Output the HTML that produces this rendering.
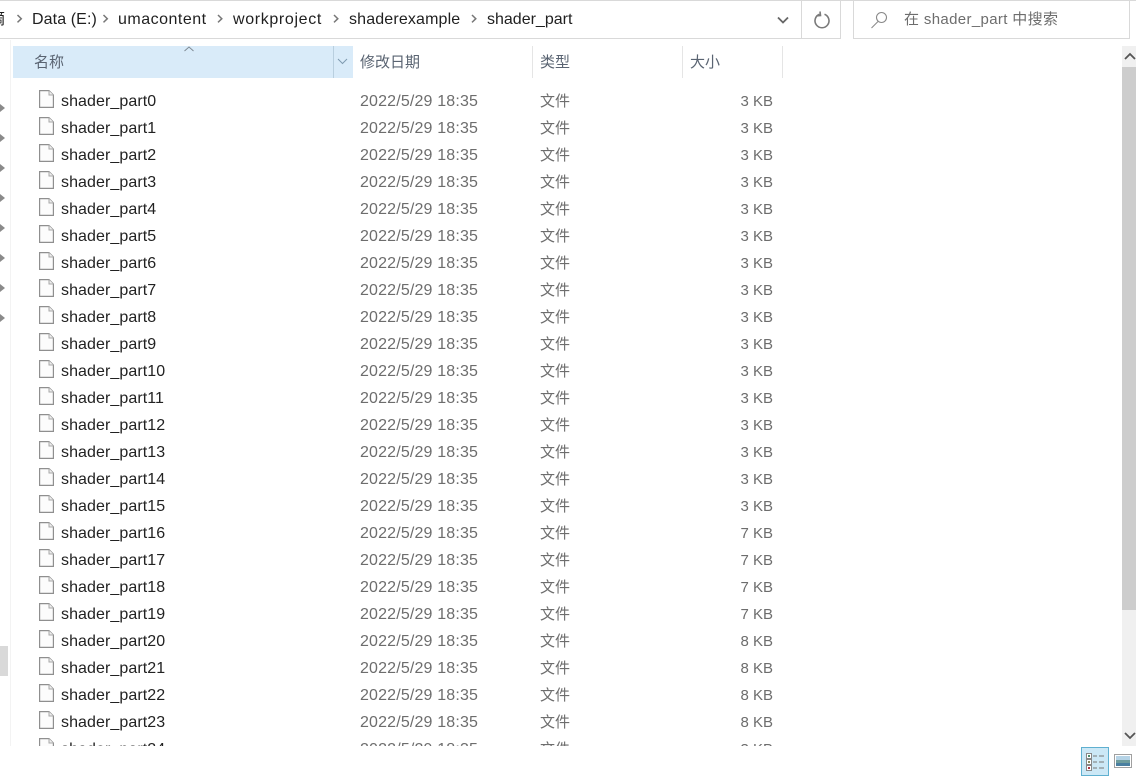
<!DOCTYPE html>
<html lang="zh">
<head>
<meta charset="utf-8">
<title>shader_part</title>
<style>
html,body{margin:0;padding:0;background:#fff}
body{width:1136px;height:777px;position:relative;overflow:hidden;font-family:"Liberation Sans","Noto Sans CJK SC",sans-serif;font-size:16px}
.a{position:absolute;white-space:nowrap}
.crumb{top:10px;height:20px;line-height:20px;color:#1f1f1f;font-size:16px}
.hd{top:53px;height:20px;line-height:20px;color:#5a6472;font-size:15px}
#list{position:absolute;left:0;top:87px;width:1100px;height:659px;overflow:hidden}
.r{position:absolute;left:0;width:800px;height:27px;line-height:27px}
.r svg{position:absolute;left:39px;top:3px}
.n{position:absolute;top:1px;left:61px;color:#222;letter-spacing:.08px}
.d{position:absolute;top:1px;left:360px;color:#6d6d6d;letter-spacing:.16px}
.t{position:absolute;top:1px;left:540px;color:#6d6d6d;font-size:15px}
.s{position:absolute;top:1px;right:27px;color:#6d6d6d;font-size:15px}
.tri{position:absolute;left:0;width:0;height:0;border-left:5px solid #8a8a8a;border-top:4px solid transparent;border-bottom:4px solid transparent}
</style>
</head>
<body>
<svg width="0" height="0" style="position:absolute"><defs>
<symbol id="f" viewBox="0 0 15 18"><path d="M.6.6H10L14.400 5V17.400H.6Z" fill="#fcfcfc" stroke="#8f8f8f" stroke-width="1.200"/><path d="M10 .6V5H14.400" fill="#eee" stroke="#a8a8a8"/></symbol>
</defs></svg>

<!-- top toolbar -->
<div class="a" style="left:0;top:0;width:1136px;height:1px;background:#d9d9d9"></div>
<div class="a" style="left:0;top:38px;width:802px;height:1px;background:#d9d9d9"></div>
<div class="a" style="left:801px;top:0;width:1px;height:39px;background:#d9d9d9"></div>
<div class="a" style="left:801px;top:0;width:40px;height:39px;border-right:1px solid #d9d9d9;border-bottom:1px solid #d9d9d9;box-sizing:border-box"></div>
<div class="a" style="left:853px;top:0;width:277px;height:39px;border:1px solid #d9d9d9;box-sizing:border-box"></div>

<div class="a crumb" style="left:-11px">摘</div>
<div class="a crumb" style="left:32px;letter-spacing:.1px">Data (E:)</div>
<div class="a crumb" style="left:118px;letter-spacing:.5px">umacontent</div>
<div class="a crumb" style="left:233px;letter-spacing:.65px">workproject</div>
<div class="a crumb" style="left:349px;letter-spacing:.15px">shaderexample</div>
<div class="a crumb" style="left:487px">shader_part</div>

<svg class="a" style="left:0;top:0" width="500" height="39" fill="none" stroke="#777" stroke-width="1.500">
<path d="M17.500 15l3.800 3.700-3.800 3.700"/><path d="M103.500 15l3.800 3.700-3.800 3.700"/><path d="M218 15l3.800 3.700-3.800 3.700"/><path d="M334 15l3.800 3.700-3.800 3.700"/><path d="M472 15l3.800 3.700-3.800 3.700"/>
</svg>
<svg class="a" style="left:776px;top:15px" width="14" height="10" fill="none" stroke="#666" stroke-width="1.800"><path d="M2 2.500l5 5 5-5"/></svg>
<svg class="a" style="left:813px;top:11px" width="18" height="18" fill="none" stroke="#7a7a7a" stroke-width="1.600"><path d="M6.500 3.200A7 7 0 1 0 11.500 3.200"/><path d="M6 .5L6.500 4.500 2.500 4.800" transform="translate(1 0)"/></svg>
<svg class="a" style="left:870px;top:11px" width="18" height="18" fill="none" stroke="#8a8a8a" stroke-width="1.100"><circle cx="11.500" cy="6.500" r="5"/><path d="M8 10.500L1.500 17"/></svg>
<div class="a" style="left:904px;top:10px;height:20px;line-height:20px;color:#6d6d6d;font-size:15px;letter-spacing:.35px">在 shader_part 中搜索</div>

<!-- left nav slice -->
<div class="a" style="left:10px;top:40px;width:1px;height:706px;background:#f3f3f3"></div>
<div class="a" style="left:0;top:646px;width:8px;height:30px;background:#d9d9d9"></div>
<div class="tri" style="top:104px"></div>
<div class="tri" style="top:134px"></div>
<div class="tri" style="top:164px"></div>
<div class="tri" style="top:194px"></div>
<div class="tri" style="top:224px"></div>
<div class="tri" style="top:254px"></div>
<div class="tri" style="top:284px"></div>
<div class="tri" style="top:314px"></div>

<!-- headers -->
<div class="a" style="left:13px;top:46px;width:340px;height:32px;background:#d9ebf9"></div>
<div class="a" style="left:333px;top:46px;width:1px;height:32px;background:#b9cfdf"></div>
<svg class="a" style="left:183px;top:45px" width="12" height="8" fill="none" stroke="#7f8a94" stroke-width="1"><path d="M1.500 6L6 2l4.500 4"/></svg>
<svg class="a" style="left:337px;top:58px" width="11" height="7" fill="none" stroke="#7f9ab0" stroke-width="1"><path d="M1 1l4.500 4.500L10 1"/></svg>
<div class="a hd" style="left:34px">名称</div>
<div class="a hd" style="left:360px">修改日期</div>
<div class="a hd" style="left:540px">类型</div>
<div class="a hd" style="left:690px">大小</div>
<div class="a" style="left:532px;top:46px;width:1px;height:32px;background:#e5e5e5"></div>
<div class="a" style="left:682px;top:46px;width:1px;height:32px;background:#e5e5e5"></div>
<div class="a" style="left:782px;top:46px;width:1px;height:32px;background:#e5e5e5"></div>

<!-- rows -->
<div id="list">
<div class="r" style="top:0"><svg width="15" height="18"><use href="#f"/></svg><span class="n">shader_part0</span><span class="d">2022/5/29 18:35</span><span class="t">文件</span><span class="s">3 KB</span></div>
<div class="r" style="top:27px"><svg width="15" height="18"><use href="#f"/></svg><span class="n">shader_part1</span><span class="d">2022/5/29 18:35</span><span class="t">文件</span><span class="s">3 KB</span></div>
<div class="r" style="top:54px"><svg width="15" height="18"><use href="#f"/></svg><span class="n">shader_part2</span><span class="d">2022/5/29 18:35</span><span class="t">文件</span><span class="s">3 KB</span></div>
<div class="r" style="top:81px"><svg width="15" height="18"><use href="#f"/></svg><span class="n">shader_part3</span><span class="d">2022/5/29 18:35</span><span class="t">文件</span><span class="s">3 KB</span></div>
<div class="r" style="top:108px"><svg width="15" height="18"><use href="#f"/></svg><span class="n">shader_part4</span><span class="d">2022/5/29 18:35</span><span class="t">文件</span><span class="s">3 KB</span></div>
<div class="r" style="top:135px"><svg width="15" height="18"><use href="#f"/></svg><span class="n">shader_part5</span><span class="d">2022/5/29 18:35</span><span class="t">文件</span><span class="s">3 KB</span></div>
<div class="r" style="top:162px"><svg width="15" height="18"><use href="#f"/></svg><span class="n">shader_part6</span><span class="d">2022/5/29 18:35</span><span class="t">文件</span><span class="s">3 KB</span></div>
<div class="r" style="top:189px"><svg width="15" height="18"><use href="#f"/></svg><span class="n">shader_part7</span><span class="d">2022/5/29 18:35</span><span class="t">文件</span><span class="s">3 KB</span></div>
<div class="r" style="top:216px"><svg width="15" height="18"><use href="#f"/></svg><span class="n">shader_part8</span><span class="d">2022/5/29 18:35</span><span class="t">文件</span><span class="s">3 KB</span></div>
<div class="r" style="top:243px"><svg width="15" height="18"><use href="#f"/></svg><span class="n">shader_part9</span><span class="d">2022/5/29 18:35</span><span class="t">文件</span><span class="s">3 KB</span></div>
<div class="r" style="top:270px"><svg width="15" height="18"><use href="#f"/></svg><span class="n">shader_part10</span><span class="d">2022/5/29 18:35</span><span class="t">文件</span><span class="s">3 KB</span></div>
<div class="r" style="top:297px"><svg width="15" height="18"><use href="#f"/></svg><span class="n">shader_part11</span><span class="d">2022/5/29 18:35</span><span class="t">文件</span><span class="s">3 KB</span></div>
<div class="r" style="top:324px"><svg width="15" height="18"><use href="#f"/></svg><span class="n">shader_part12</span><span class="d">2022/5/29 18:35</span><span class="t">文件</span><span class="s">3 KB</span></div>
<div class="r" style="top:351px"><svg width="15" height="18"><use href="#f"/></svg><span class="n">shader_part13</span><span class="d">2022/5/29 18:35</span><span class="t">文件</span><span class="s">3 KB</span></div>
<div class="r" style="top:378px"><svg width="15" height="18"><use href="#f"/></svg><span class="n">shader_part14</span><span class="d">2022/5/29 18:35</span><span class="t">文件</span><span class="s">3 KB</span></div>
<div class="r" style="top:405px"><svg width="15" height="18"><use href="#f"/></svg><span class="n">shader_part15</span><span class="d">2022/5/29 18:35</span><span class="t">文件</span><span class="s">3 KB</span></div>
<div class="r" style="top:432px"><svg width="15" height="18"><use href="#f"/></svg><span class="n">shader_part16</span><span class="d">2022/5/29 18:35</span><span class="t">文件</span><span class="s">7 KB</span></div>
<div class="r" style="top:459px"><svg width="15" height="18"><use href="#f"/></svg><span class="n">shader_part17</span><span class="d">2022/5/29 18:35</span><span class="t">文件</span><span class="s">7 KB</span></div>
<div class="r" style="top:486px"><svg width="15" height="18"><use href="#f"/></svg><span class="n">shader_part18</span><span class="d">2022/5/29 18:35</span><span class="t">文件</span><span class="s">7 KB</span></div>
<div class="r" style="top:513px"><svg width="15" height="18"><use href="#f"/></svg><span class="n">shader_part19</span><span class="d">2022/5/29 18:35</span><span class="t">文件</span><span class="s">7 KB</span></div>
<div class="r" style="top:540px"><svg width="15" height="18"><use href="#f"/></svg><span class="n">shader_part20</span><span class="d">2022/5/29 18:35</span><span class="t">文件</span><span class="s">8 KB</span></div>
<div class="r" style="top:567px"><svg width="15" height="18"><use href="#f"/></svg><span class="n">shader_part21</span><span class="d">2022/5/29 18:35</span><span class="t">文件</span><span class="s">8 KB</span></div>
<div class="r" style="top:594px"><svg width="15" height="18"><use href="#f"/></svg><span class="n">shader_part22</span><span class="d">2022/5/29 18:35</span><span class="t">文件</span><span class="s">8 KB</span></div>
<div class="r" style="top:621px"><svg width="15" height="18"><use href="#f"/></svg><span class="n">shader_part23</span><span class="d">2022/5/29 18:35</span><span class="t">文件</span><span class="s">8 KB</span></div>
<div class="r" style="top:648px"><svg width="15" height="18"><use href="#f"/></svg><span class="n">shader_part24</span><span class="d">2022/5/29 18:35</span><span class="t">文件</span><span class="s">3 KB</span></div>
</div>

<!-- scrollbar -->
<div class="a" style="left:1122px;top:46px;width:14px;height:700px;background:#f0f0f0"></div>
<div class="a" style="left:1122px;top:67px;width:14px;height:543px;background:#cdcdcd"></div>
<svg class="a" style="left:1124px;top:52px" width="12" height="9" fill="none" stroke="#555" stroke-width="1.800"><path d="M1 7l5-5 5 5"/></svg>
<svg class="a" style="left:1124px;top:731px" width="12" height="9" fill="none" stroke="#555" stroke-width="1.800"><path d="M1 2l5 5 5-5"/></svg>

<!-- view buttons -->
<div class="a" style="left:1081px;top:747px;width:28px;height:29px;background:#cce8f6;border:1px solid #5fb0d0;box-sizing:border-box"></div>
<svg class="a" style="left:1086px;top:753px" width="20" height="18">
<rect x=".5" y=".5" width="5" height="5" fill="#fff" stroke="#888"/><rect x=".5" y="6.500" width="5" height="5" fill="#fff" stroke="#888"/><rect x=".5" y="12.500" width="5" height="5" fill="#fff" stroke="#888"/>
<rect x="2" y="2" width="2" height="2" fill="#4a8a6a"/><rect x="2" y="8" width="2" height="2" fill="#8a8a5a"/><rect x="2" y="14" width="2" height="2" fill="#b03040"/>
<path d="M7 3h4M13 3h5M7 9h4M13 9h5M7 15h4M13 15h5" stroke="#777" stroke-width="1"/>
</svg>
<svg class="a" style="left:1114px;top:754px" width="18" height="14">
<rect x=".5" y=".5" width="17" height="13" fill="#fff" stroke="#a0a0a0"/>
<rect x="2" y="2" width="14" height="4" fill="#b5d3e6"/><rect x="2" y="6" width="14" height="3" fill="#6f9c9c"/><rect x="2" y="9" width="14" height="3" fill="#4a7fa0"/>
</svg>
</body>
</html>
